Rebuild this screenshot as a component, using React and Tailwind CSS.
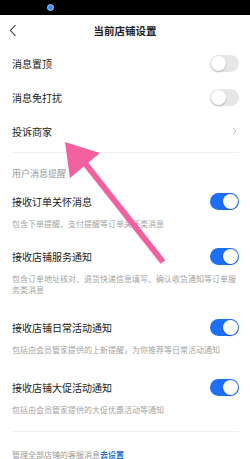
import { useState } from 'react'

const Toggle = ({ on }) => (
    <div className={`w-[29px] h-[17px] rounded-full relative ${on ? 'bg-[#1d6ff5]' : 'bg-[#e6e6e6]'}`}>
        <div className={`absolute top-[1px] w-[15px] h-[15px] rounded-full bg-white shadow-[0_1px_2px_rgba(0,0,0,0.25)] ${on ? 'right-[1px]' : 'left-[1px]'}`}></div>
    </div>
)

const Row = ({ label, children }) => (
    <div className='h-[34px] flex items-center justify-between'>
        <p className='text-[10px] text-[#222]'>{label}</p>
        {children}
    </div>
)

const Notice = ({ title, desc, gap }) => (
    <div className={gap}>
        <div className='h-[22px] flex items-center justify-between'>
            <p className='text-[10px] text-[#222]'>{title}</p>
            <Toggle on />
        </div>
        <p className='mt-[6px] text-[8px] leading-[11px] text-[#a3a3a3]'>{desc}</p>
    </div>
)

const App = () => {
    const [rows] = useState([
        { title: '接收订单关怀消息', desc: '包含下单提醒、支付提醒等订单关怀类消息', gap: '' },
        { title: '接收店铺服务通知', desc: '包含订单地址核对、退货快递信息填写、确认收货通知等订单服务类消息', gap: 'mt-[16px]' },
        { title: '接收店铺日常活动通知', desc: '包括由会员管家提供的上新提醒，为你推荐等日常活动通知', gap: 'mt-[21px]' },
        { title: '接收店铺大促活动通知', desc: '包括由会员管家提供的大促优惠活动等通知', gap: 'mt-[21px]' },
    ])

    return (
        <div className='relative w-[250px] h-[459px] overflow-hidden bg-white font-["Noto_Sans_CJK_SC","Noto_Sans",sans-serif]'>
            {/* status bar */}
            <div className='h-[15px] bg-black flex items-center pl-[47px]'>
                <div className='w-[7px] h-[7px] rounded-full bg-[#3d8ef0] border border-[#a9cdf7]'></div>
            </div>

            {/* header */}
            <div className='h-[31px] relative flex items-center justify-center'>
                <svg className='absolute left-[9px] top-[9px]' width='8' height='13' viewBox='0 0 8 13'>
                    <path d='M6.5 1 L1.5 6.5 L6.5 12' fill='none' stroke='#333' strokeWidth='1.1' />
                </svg>
                <p className='text-[10.5px] font-bold text-[#222]'>当前店铺设置</p>
            </div>

            <div className='px-[12px] pr-[11px]'>
                <Row label='消息置顶'><Toggle /></Row>
                <Row label='消息免打扰'><Toggle /></Row>
                <Row label='投诉商家'>
                    <svg width='5' height='8' viewBox='0 0 5 8' className='mr-[2px]'>
                        <path d='M1 1 L4 4 L1 7' fill='none' stroke='#b5b5b5' strokeWidth='0.9' />
                    </svg>
                </Row>
                <div className='mt-[4px] border-t border-[#f0f0f0]'></div>

                <div className='mt-[10px] h-[22px] flex items-center'>
                    <p className='text-[9px] text-[#999]'>用户消息提醒</p>
                </div>

                <div className='mt-[5px]'>
                    {rows.map((r, i) => (
                        <Notice key={i} title={r.title} desc={r.desc} gap={r.gap} />
                    ))}
                </div>

                <div className='mt-[16px] border-t border-[#f0f0f0]'></div>
                <p className='mt-[17px] text-[8px] leading-[11px] text-[#999]'>
                    管理全部店铺的客服消息<span className='text-[#2a6fd6] font-bold'>去设置</span>
                </p>
            </div>

            {/* pink arrow */}
            <svg className='absolute left-0 top-0 pointer-events-none' width='250' height='459' viewBox='0 0 250 459'>
                <line x1='163' y1='262' x2='84' y2='162' stroke='#f2609f' strokeWidth='6' />
                <polygon points='65,142 100,153 70,178' fill='#f2609f' />
            </svg>
        </div>
    )
}

export default App
